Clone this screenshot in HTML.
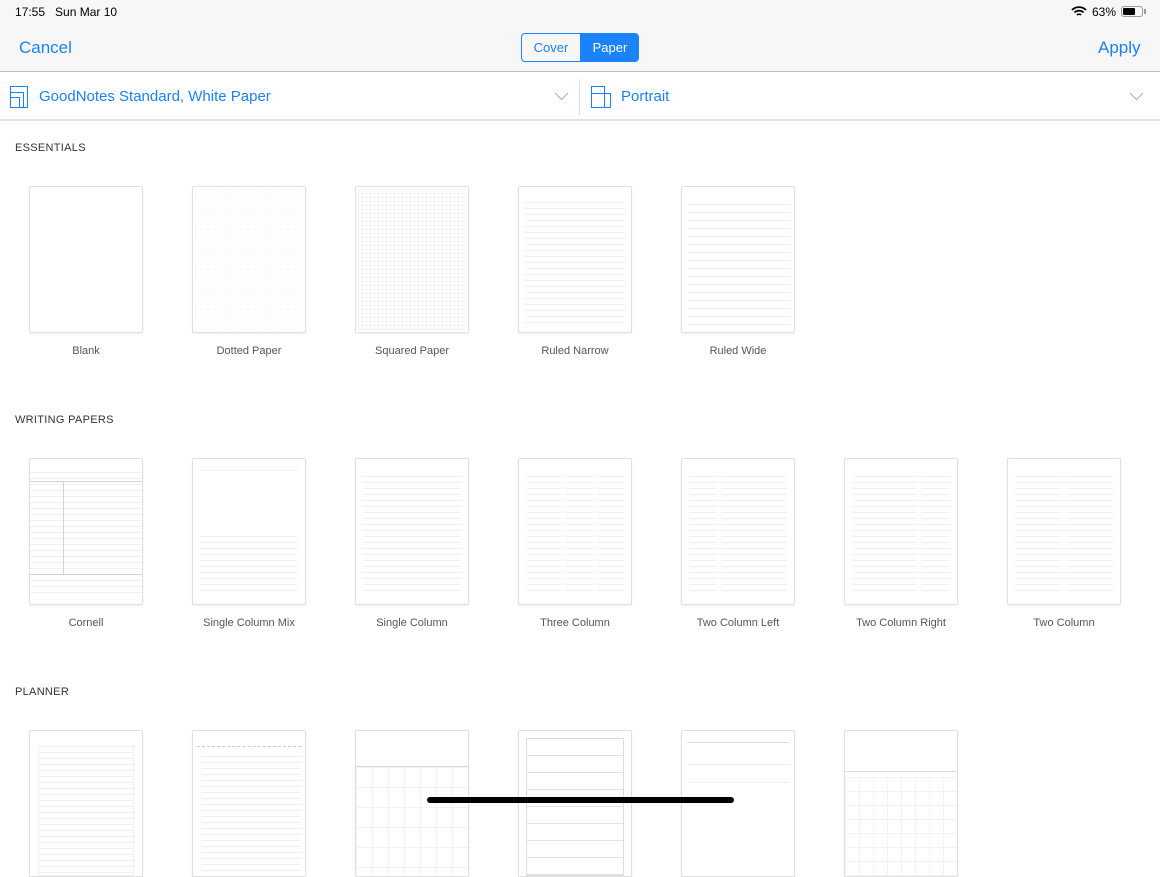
<!DOCTYPE html>
<html><head><meta charset="utf-8"><style>
*{margin:0;padding:0;box-sizing:border-box}
body{width:1160px;height:810px;overflow:hidden;background:#fff;font-family:"Liberation Sans",sans-serif;position:relative}
.top{position:absolute;left:0;top:0;width:1160px;height:72px;background:#f7f7f7;border-bottom:1px solid #bdbdbd}
.abs{position:absolute}
.blue{color:#1a82fb}
.bar2{position:absolute;top:73px;left:0;width:1160px;height:48px;border-bottom:2px solid #e3e3e3;background:#fff}
.sec{position:absolute;left:15px;font-size:11px;color:#333;letter-spacing:.3px}
.card{position:absolute;width:114px;height:147px;border:1px solid #e0e0e0;border-radius:2px;background:#fff;box-shadow:0 1px 2px rgba(0,0,0,.07);overflow:hidden}
.lbl{position:absolute;width:160px;text-align:center;font-size:11px;color:#555}
.in{position:absolute}
.ruled{background:repeating-linear-gradient(#fff 0 5px,#f0f0f0 5px 6px)}
.ruledw{background:repeating-linear-gradient(#fff 0 7px,#eeeeee 7px 8px)}
.grid{background-image:linear-gradient(#f2f2f2 1px,transparent 1px),linear-gradient(90deg,#f2f2f2 1px,transparent 1px);background-size:4px 4px}
</style></head><body>
<div class="top">
 <div class="abs" style="left:15px;top:5px;font-size:12px;color:#000">17:55&nbsp;&nbsp; Sun Mar 10</div>
 <div class="abs" style="left:1092px;top:5px;font-size:12px;color:#000">63%</div>
 <svg class="abs" style="left:1071px;top:6px" width="16" height="11" viewBox="0 0 16 11"><path d="M1 4a10 10 0 0 1 14 0M3.5 6.5a6.5 6.5 0 0 1 9 0M6 9a3 3 0 0 1 4 0" stroke="#000" stroke-width="1.8" fill="none"/></svg>
 <div class="abs" style="left:1121px;top:6px;width:22px;height:11px;border:1px solid #999;border-radius:3px"><div style="margin:1px;width:12px;height:7px;background:#000;border-radius:1px"></div></div>
 <div class="abs" style="left:1144px;top:9px;width:2px;height:5px;background:#999"></div>
 <div class="abs blue" style="left:19px;top:38px;font-size:17px">Cancel</div>
 <div class="abs blue" style="left:1098px;top:38px;font-size:17px">Apply</div>
 <div class="abs" style="left:521px;top:33px;width:118px;height:29px;border:1px solid #1a82fb;border-radius:4px;overflow:hidden;font-size:13px">
  <div class="abs blue" style="left:0;top:0;width:58px;height:27px;line-height:27px;text-align:center">Cover</div>
  <div class="abs" style="left:58px;top:0;width:60px;height:27px;line-height:27px;text-align:center;background:#1a82fb;color:#fff">Paper</div>
 </div>
</div>
<div class="bar2">
 <svg class="abs" style="left:10px;top:13px" width="18" height="22" viewBox="0 0 18 22"><rect x=".5" y=".5" width="17" height="21" fill="none" stroke="#1a82fb"/><path d="M.5 6.5h13v15M.5 11.5h9v10" fill="none" stroke="#1a82fb"/></svg>
 <div class="abs blue" style="left:39px;top:15px;font-size:15px">GoodNotes Standard, White Paper</div>
 <svg class="abs" style="left:554px;top:19px" width="15" height="9"><path d="M1 1l6.5 6.5L14 1" stroke="#aaa" fill="none"/></svg>
 <div class="abs" style="left:579px;top:6px;width:1px;height:36px;background:#ddd"></div>
 <svg class="abs" style="left:591px;top:13px" width="20" height="22" viewBox="0 0 20 22"><rect x=".5" y=".5" width="13" height="21" fill="none" stroke="#1a82fb"/><rect x=".5" y="7.5" width="19" height="14" fill="none" stroke="#1a82fb"/></svg>
 <div class="abs blue" style="left:621px;top:15px;font-size:15px">Portrait</div>
 <svg class="abs" style="left:1129px;top:19px" width="15" height="9"><path d="M1 1l6.5 6.5L14 1" stroke="#aaa" fill="none"/></svg>
</div>

<div class="sec" style="top:142px">ESSENTIALS</div>
<div class="card" style="left:29px;top:186px"></div>
<div class="card" style="left:192px;top:186px;background-image:radial-gradient(#f0f0f0 .6px,transparent .8px);background-size:5px 5px"></div>
<div class="card" style="left:355px;top:186px"><div class="in grid" style="left:2px;top:2px;right:2px;bottom:2px"></div></div>
<div class="card" style="left:518px;top:186px"><div class="in ruled" style="left:5px;top:10px;right:5px;bottom:6px"></div></div>
<div class="card" style="left:681px;top:186px"><div class="in ruledw" style="left:5px;top:10px;right:5px;bottom:6px"></div></div>
<div class="lbl" style="left:6px;top:345px">Blank</div>
<div class="lbl" style="left:169px;top:345px">Dotted Paper</div>
<div class="lbl" style="left:332px;top:345px">Squared Paper</div>
<div class="lbl" style="left:495px;top:345px">Ruled Narrow</div>
<div class="lbl" style="left:658px;top:345px">Ruled Wide</div>

<div class="sec" style="top:414px">WRITING PAPERS</div>
<div class="card" style="left:29px;top:458px">
 <div class="in ruled" style="left:0;top:8px;right:0;bottom:8px"></div>
 <div class="in" style="left:0;right:0;top:22px;height:1px;background:#d4d4d4"></div>
 <div class="in" style="left:0;right:0;top:115px;height:1px;background:#d4d4d4"></div>
 <div class="in" style="left:33px;top:22px;width:1px;height:93px;background:#d4d4d4"></div>
</div>
<div class="card" style="left:192px;top:458px">
 <div class="in" style="left:7px;right:7px;top:11px;height:1px;background:#eee"></div>
 <div class="in ruled" style="left:7px;right:7px;top:72px;height:60px"></div></div>
<div class="card" style="left:355px;top:458px"><div class="in ruled" style="left:7px;right:7px;top:12px;bottom:8px"></div></div>
<div class="card" style="left:518px;top:458px"><div class="in ruled" style="left:7px;right:7px;top:12px;bottom:8px"></div><div class="in" style="left:42px;width:4px;top:0;bottom:0;background:#fff"></div><div class="in" style="left:74px;width:4px;top:0;bottom:0;background:#fff"></div></div>
<div class="card" style="left:681px;top:458px"><div class="in ruled" style="left:7px;right:7px;top:12px;bottom:8px"></div><div class="in" style="left:35px;width:4px;top:0;bottom:0;background:#fff"></div></div>
<div class="card" style="left:844px;top:458px"><div class="in ruled" style="left:7px;right:7px;top:12px;bottom:8px"></div><div class="in" style="left:72px;width:4px;top:0;bottom:0;background:#fff"></div></div>
<div class="card" style="left:1007px;top:458px"><div class="in ruled" style="left:7px;right:7px;top:12px;bottom:8px"></div><div class="in" style="left:54px;width:4px;top:0;bottom:0;background:#fff"></div></div>
<div class="lbl" style="left:6px;top:617px">Cornell</div>
<div class="lbl" style="left:169px;top:617px">Single Column Mix</div>
<div class="lbl" style="left:332px;top:617px">Single Column</div>
<div class="lbl" style="left:495px;top:617px">Three Column</div>
<div class="lbl" style="left:658px;top:617px">Two Column Left</div>
<div class="lbl" style="left:821px;top:617px">Two Column Right</div>
<div class="lbl" style="left:984px;top:617px">Two Column</div>

<div class="sec" style="top:686px">PLANNER</div>
<div class="card" style="left:29px;top:730px"><div class="in ruled" style="left:8px;right:8px;top:15px;bottom:0;border:1px solid #f0f0f0"></div></div>
<div class="card" style="left:192px;top:730px"><div class="in" style="left:4px;right:4px;top:15px;height:2px;border-top:1px dashed #ccc"></div><div class="in ruled" style="left:8px;right:4px;top:20px;bottom:0"></div></div>
<div class="card" style="left:355px;top:730px"><div class="in" style="left:0;right:0;top:35px;height:1px;background:#d8d8d8"></div><div class="in grid" style="left:0;right:0;top:36px;bottom:0;background-size:16px 20px"></div></div>
<div class="card" style="left:518px;top:730px"><div class="in" style="left:7px;right:7px;top:7px;bottom:0;border:1px solid #ddd;background:repeating-linear-gradient(#fff 0 16px,#e2e2e2 16px 17px)"></div></div>
<div class="card" style="left:681px;top:730px"><div class="in" style="left:5px;right:5px;top:11px;height:1px;background:#ddd"></div><div class="in" style="left:5px;right:5px;top:16px;height:40px;background:repeating-linear-gradient(#fff 0 17px,#eee 17px 18px)"></div></div>
<div class="card" style="left:844px;top:730px"><div class="in" style="left:0;right:0;top:40px;height:1px;background:#ddd"></div><div class="in grid" style="left:0;right:0;top:46px;bottom:0;background-size:14px 14px"></div></div>

<div class="abs" style="left:427px;top:797px;width:307px;height:6px;border-radius:3px;background:#000"></div>
</body></html>
